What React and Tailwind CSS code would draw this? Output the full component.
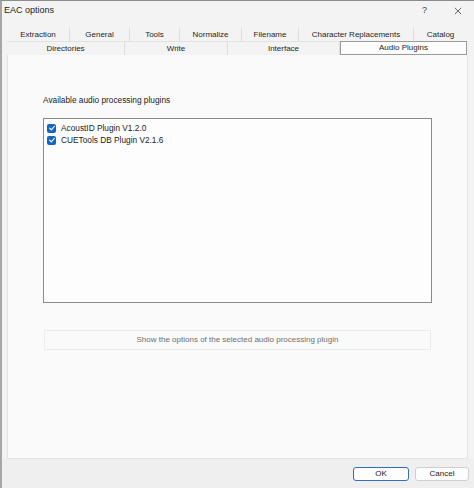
import React from 'react'

const rowOne = [
  { label: 'Extraction', w: 'w-[63px]' },
  { label: 'General', w: 'w-[60px]' },
  { label: 'Tools', w: 'w-[50px]' },
  { label: 'Normalize', w: 'w-[62px]' },
  { label: 'Filename', w: 'w-[57px]' },
  { label: 'Character Replacements', w: 'w-[115px]' },
  { label: 'Catalog', w: 'w-[53px]' },
]

const rowTwo = [
  { label: 'Directories', w: 'w-[118px]' },
  { label: 'Write', w: 'w-[103px]' },
  { label: 'Interface', w: 'w-[112px]' },
  { label: 'Audio Plugins', w: 'w-[127px]', active: true },
]

const plugins = ['AcoustID Plugin V1.2.0', 'CUETools DB Plugin V2.1.6']

function Check() {
  return (
    <span className="flex h-[9px] w-[9px] items-center justify-center rounded-[2px] bg-[#1464c0]">
      <svg viewBox="0 0 10 10" className="h-[8px] w-[8px]" fill="none" stroke="white" strokeWidth={1.4} strokeLinecap="round" strokeLinejoin="round">
        <path d="M2 5.2 4.2 7.3 8 2.8" />
      </svg>
    </span>
  )
}

function Tab({ label, w, active }) {
  if (active) {
    return (
      <div className={`${w} flex h-[14px] -mt-px items-center justify-center border border-[#9a9a9a] bg-[#fbfcfb] text-[#1e1e1e]`}>
        {label}
      </div>
    )
  }
  return (
    <div className={`${w} flex h-[13px] items-center justify-center border-r border-[#dedede] text-[#262626] last:border-r-0`}>
      {label}
    </div>
  )
}

export default function App() {
  return (
    <div className="flex h-[488px] w-[474px] flex-col overflow-hidden border-l-2 border-t border-l-[#a6a6a6] border-t-[#8c8c8c] bg-[#f3f3f3] font-['Liberation_Sans',Arial,sans-serif] text-[#1b1b1b]">
      {/* title bar */}
      <div className="flex h-[20px] items-center pl-[2px]">
        <span className="text-[9px]">EAC options</span>
        <span className="ml-auto text-[9px] font-light text-[#444]">?</span>
        <svg viewBox="0 0 10 10" className="ml-[27px] mr-[12px] h-[8px] w-[8px]" stroke="#333" strokeWidth={0.9}>
          <path d="M1 1 9 9M9 1 1 9" />
        </svg>
      </div>

      {/* tabs */}
      <div className="ml-[5px] mt-[7px] w-[461px] text-[8px]">
        <div className="flex">
          {rowOne.map((t) => (
            <Tab key={t.label} {...t} />
          ))}
        </div>
        <div className="flex border-t border-[#e2e2e2]">
          {rowTwo.map((t) => (
            <Tab key={t.label} {...t} />
          ))}
        </div>
      </div>

      {/* panel */}
      <div className="ml-[5px] h-[404px] w-[461px] border-x border-b border-[#e3e3e3] bg-[#f9faf9] pl-[35px] pt-[40px]">
        <div className="text-[8.3px] leading-[10px]">Available audio processing plugins</div>
        <div className="mt-[13px] h-[185px] w-[389px] border border-[#8a8a8a] bg-[#fdfdfd] pl-[3px] pt-[3px]">
          {plugins.map((p) => (
            <div key={p} className="flex h-[12px] items-center gap-[5px] text-[8.3px]">
              <Check />
              <span>{p}</span>
            </div>
          ))}
        </div>
        <div className="ml-px mt-[27px] flex h-[20px] w-[387px] items-center justify-center border border-[#ebebeb] text-[8px] text-[#6e6e6e]">
          Show the options of the selected audio processing plugin
        </div>
      </div>

      {/* footer */}
      <div className="flex flex-1 items-start justify-end gap-[6px] bg-[#efefef] pr-[5px] pt-[8px] text-[8px]">
        <button className="h-[14px] w-[56px] rounded-[3px] border border-[#2f6fc0] bg-[#fdfdfd]">OK</button>
        <button className="h-[14px] w-[54px] rounded-[3px] border border-[#cfcfcf] bg-[#fdfdfd]">Cancel</button>
      </div>
    </div>
  )
}
